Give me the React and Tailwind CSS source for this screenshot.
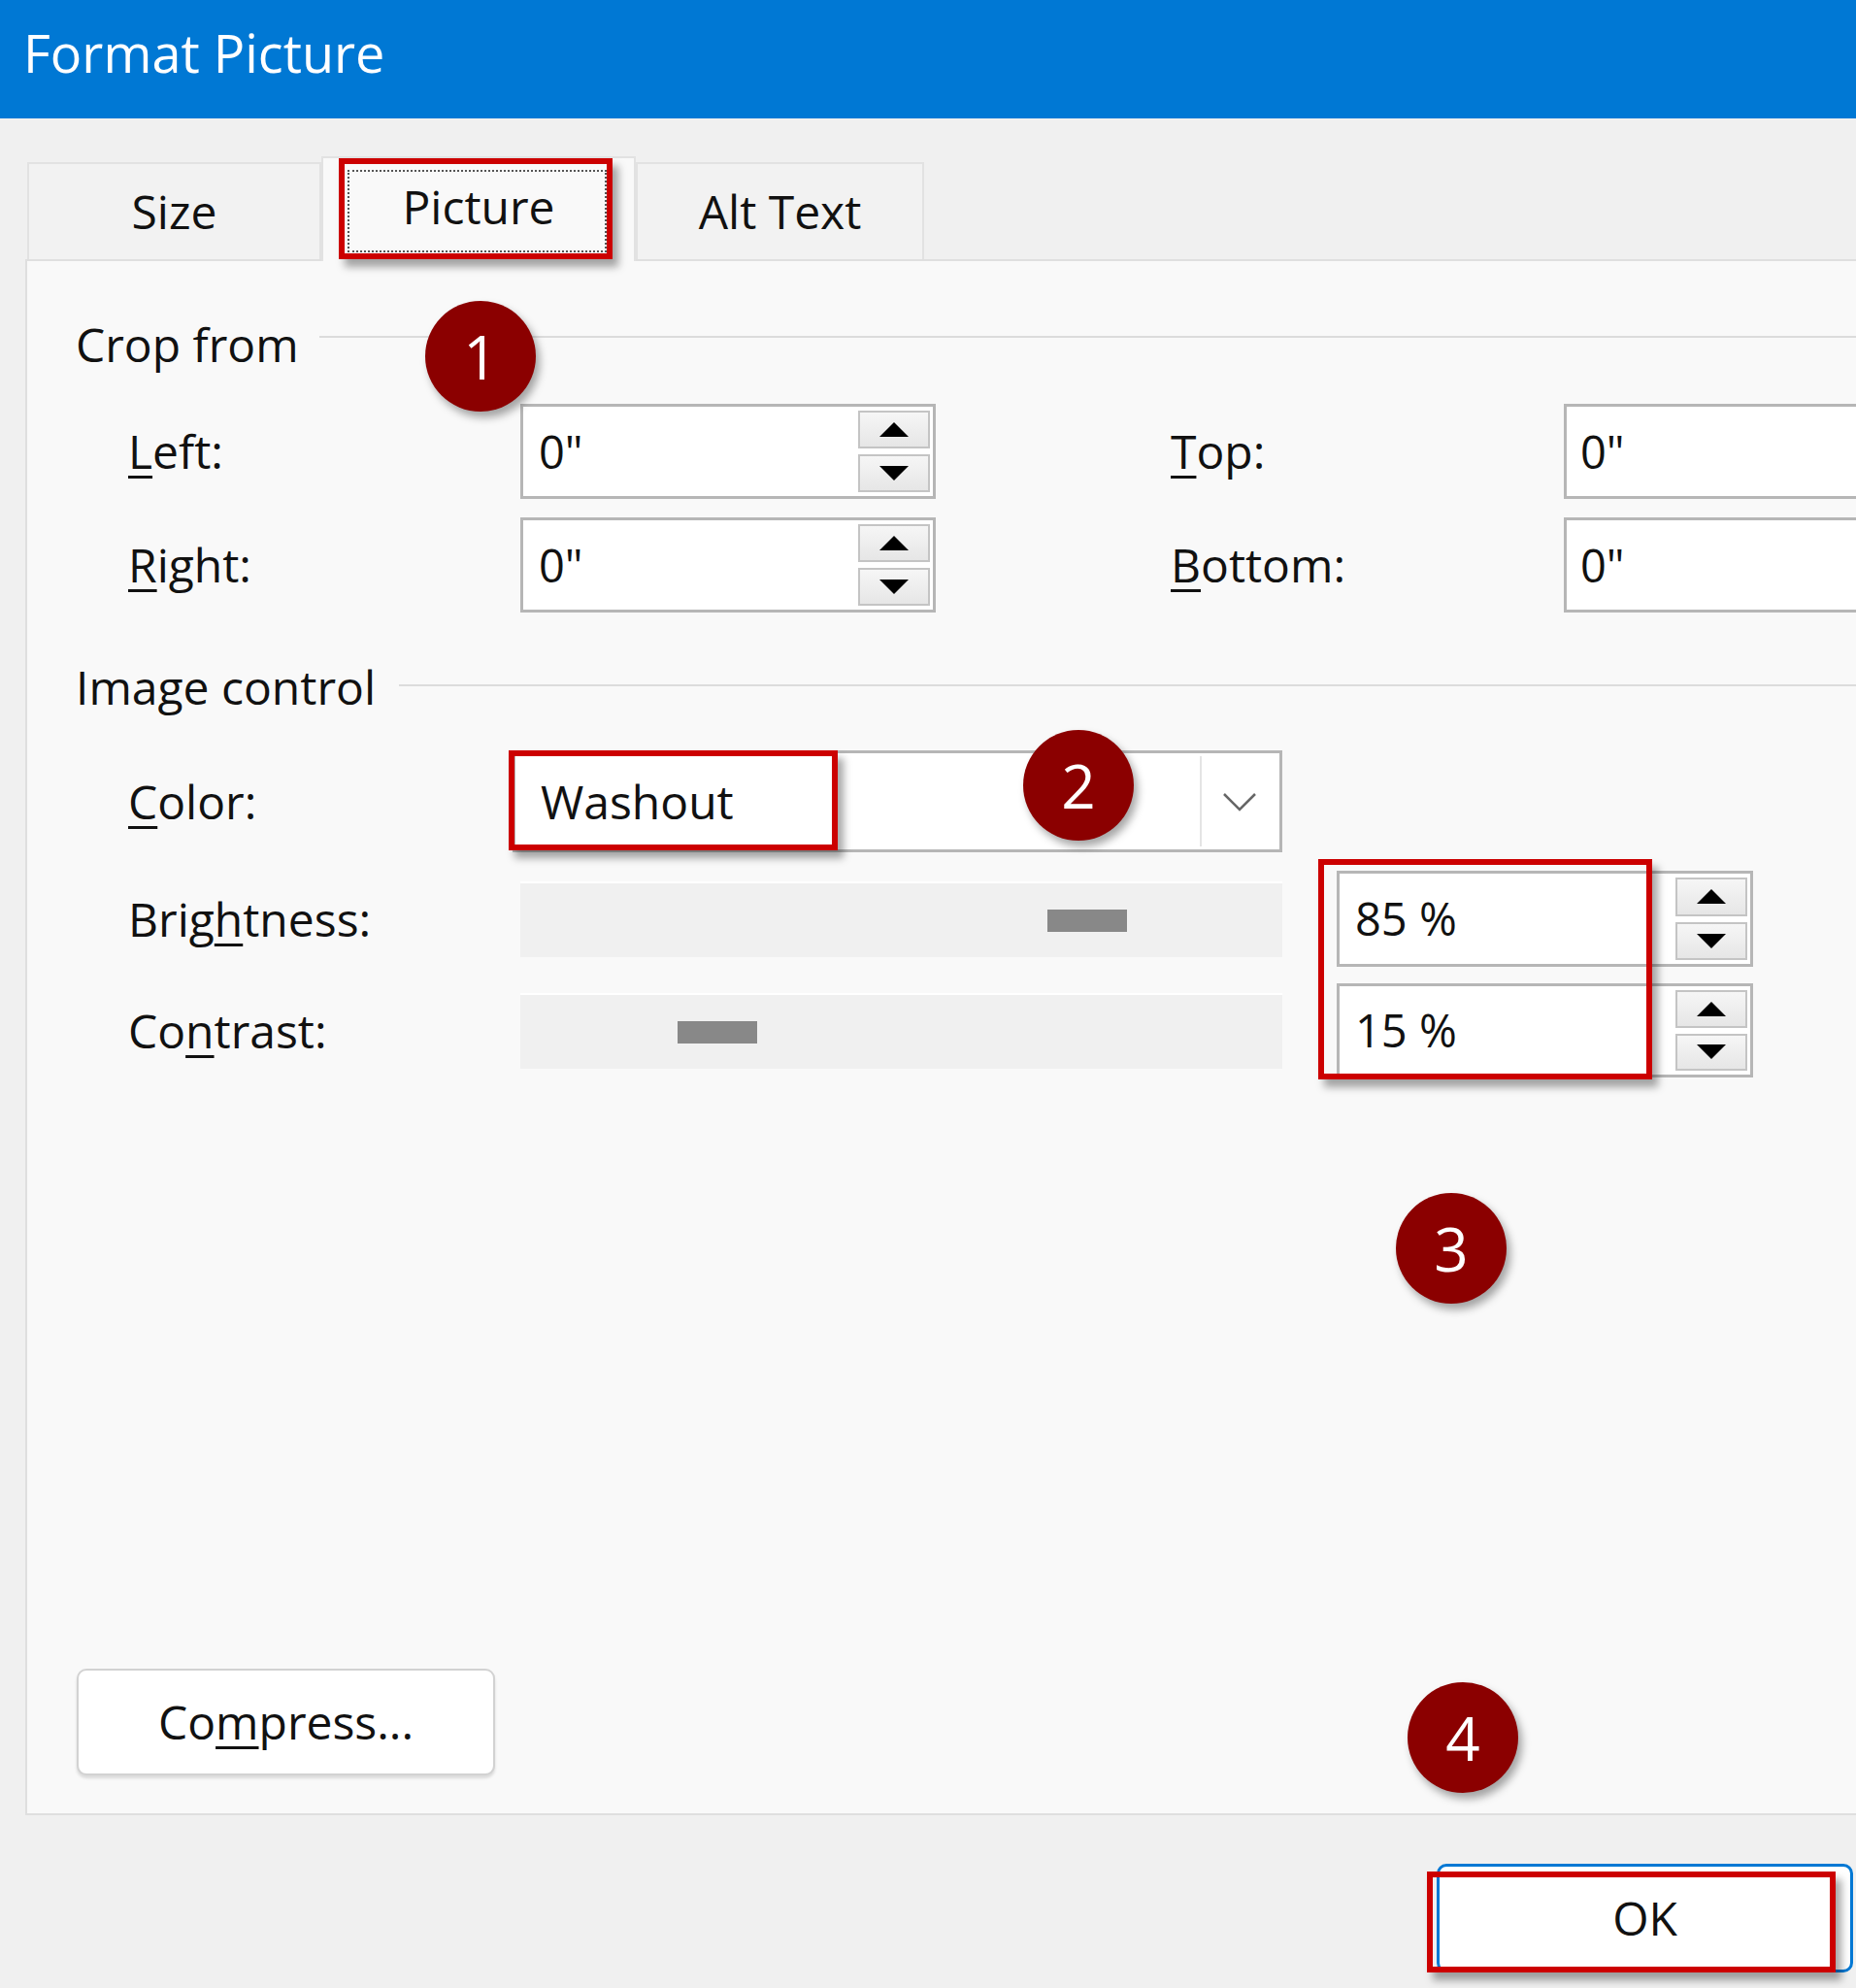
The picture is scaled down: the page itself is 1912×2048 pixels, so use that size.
import React from "react";

const font = "font-['Open_Sans','Noto_Sans',sans-serif]";

function U({ children }) {
  return <span className="underline decoration-[3px] underline-offset-[7px]">{children}</span>;
}

function Arrow({ up }) {
  return (
    <svg width="32" height="17" viewBox="0 0 32 17">
      <polygon points={up ? "16,1 31,16 1,16" : "1,1 31,1 16,16"} fill="#000" />
    </svg>
  );
}

function Spinner() {
  return (
    <div className="flex h-full w-[74px] shrink-0 flex-col gap-[6px] py-[4px]">
      <div className="flex flex-1 items-center justify-center border-2 border-[#c4c4c4] bg-gradient-to-b from-[#f6f6f6] to-[#e6e6e6]">
        <Arrow up />
      </div>
      <div className="flex flex-1 items-center justify-center border-2 border-[#c4c4c4] bg-gradient-to-b from-[#f6f6f6] to-[#e6e6e6]">
        <Arrow />
      </div>
    </div>
  );
}

function SpinInput({ value, width, height }) {
  return (
    <div
      className={`flex shrink-0 items-center justify-between border-[3px] border-[#b6b6b6] bg-white pr-[3px] ${width} ${height}`}
    >
      <span className="pl-[16px] text-[47px] leading-none text-[#111]">{value}</span>
      <Spinner />
    </div>
  );
}

function PlainInput({ value }) {
  return (
    <div className="flex h-[98px] w-[400px] shrink-0 items-center border-[3px] border-[#b6b6b6] bg-white pl-[14px]">
      <span className="text-[47px] leading-none text-[#111]">{value}</span>
    </div>
  );
}

function Badge({ n, className }) {
  return (
    <div
      className={`absolute z-30 flex h-[114px] w-[114px] items-center justify-center rounded-full bg-[#8b0000] text-[62px] font-medium leading-none text-white shadow-[4px_6px_8px_rgba(0,0,0,0.35)] ${className}`}
    >
      {n}
    </div>
  );
}

function RedBox({ className }) {
  return (
    <div
      className={`pointer-events-none absolute z-20 border-[6px] border-[#cc0000] shadow-[6px_8px_8px_rgba(0,0,0,0.35)] ${className}`}
    />
  );
}

function Slider({ thumb }) {
  return (
    <div className="relative h-[78px] w-[785px] shrink-0 border-t-2 border-white bg-[#f0f0f0]">
      <div className={`absolute top-[27px] h-[23px] w-[82px] bg-[#888888] ${thumb}`} />
    </div>
  );
}

export default function App() {
  return (
    <div className={`relative h-[2048px] w-[1912px] overflow-hidden bg-[#f0f0f0] ${font}`}>
      {/* title bar */}
      <div className="flex h-[122px] items-start bg-[#0078d4] pl-[24px] pt-[22px]">
        <span className="text-[54px] leading-[64px] text-white">Format Picture</span>
      </div>

      {/* tabs */}
      <div className="flex h-[145px] items-end pl-[28px]">
        <div className="flex h-[100px] w-[303px] shrink-0 items-center justify-center border-2 border-b-0 border-[#e2e2e2] bg-[#f2f2f2] text-[48px] text-[#111]">
          Size
        </div>
        <div className="relative z-10 -mb-[2px] flex h-[108px] w-[324px] shrink-0 items-center justify-center border-2 border-b-0 border-[#e2e2e2] bg-[#f9f9f9] text-[48px] text-[#111]">
          <div className="absolute left-[25px] right-[28px] top-[12px] bottom-[9px] border-2 border-dotted border-[#555]" />
          <span className="-mt-[6px]">Picture</span>
        </div>
        <div className="flex h-[100px] w-[297px] shrink-0 items-center justify-center border-2 border-b-0 border-[#e2e2e2] bg-[#f2f2f2] text-[48px] text-[#111]">
          Alt Text
        </div>
      </div>

      {/* panel */}
      <div className="ml-[26px] flex h-[1603px] w-[1920px] flex-col border-2 border-[#dfdfdf] bg-[#f9f9f9] text-[48px] leading-none text-[#111]">
        {/* crop from */}
        <div className="mt-[56px] flex h-[60px] items-center pl-[50px]">
          <span className="shrink-0">Crop from</span>
          <div className="ml-[21px] mb-[16px] h-[2px] flex-1 bg-[#dcdcdc]" />
        </div>

        <div className="mt-[31px] flex h-[98px] items-center pl-[104px]">
          <span className="w-[404px] shrink-0"><U>L</U>eft:</span>
          <SpinInput value={'0"'} width="w-[428px]" height="h-[98px]" />
          <span className="ml-[242px] w-[405px] shrink-0"><U>T</U>op:</span>
          <PlainInput value={'0"'} />
        </div>

        <div className="mt-[19px] flex h-[98px] items-center pl-[104px]">
          <span className="w-[404px] shrink-0"><U>R</U>ight:</span>
          <SpinInput value={'0"'} width="w-[428px]" height="h-[98px]" />
          <span className="ml-[242px] w-[405px] shrink-0"><U>B</U>ottom:</span>
          <PlainInput value={'0"'} />
        </div>

        {/* image control */}
        <div className="mt-[47px] flex h-[60px] items-center pl-[50px]">
          <span className="shrink-0">Image control</span>
          <div className="ml-[24px] mb-[4px] h-[2px] flex-1 bg-[#dcdcdc]" />
        </div>

        <div className="mt-[35px] flex h-[105px] items-center pl-[104px]">
          <span className="w-[396px] shrink-0"><U>C</U>olor:</span>
          <div className="flex h-[105px] w-[793px] shrink-0 items-stretch border-[3px] border-[#b6b6b6] bg-white">
            <span className="flex flex-1 items-center pl-[26px]">Washout</span>
            <div className="my-[3px] mr-[2px] flex w-[80px] items-center justify-center border-l-2 border-[#e4e4e4]">
              <svg width="36" height="22" viewBox="0 0 36 22">
                <polyline points="2,3 18,19 34,3" fill="none" stroke="#666" strokeWidth="2.5" />
              </svg>
            </div>
          </div>
        </div>

        <div className="mt-[19px] flex h-[99px] items-center pl-[104px]">
          <span className="w-[404px] shrink-0">Brig<U>h</U>tness:</span>
          <Slider thumb="left-[543px]" />
          <div className="ml-[56px] shrink-0">
            <SpinInput value="85 %" width="w-[429px]" height="h-[99px]" />
          </div>
        </div>

        <div className="mt-[17px] flex h-[97px] items-center pl-[104px]">
          <span className="w-[404px] shrink-0">Co<U>n</U>trast:</span>
          <Slider thumb="left-[162px]" />
          <div className="ml-[56px] shrink-0">
            <SpinInput value="15 %" width="w-[429px]" height="h-[97px]" />
          </div>
        </div>

        <div className="mt-[609px] pl-[51px]">
          <button className="flex h-[110px] w-[431px] items-center justify-center rounded-[10px] border-2 border-[#d2d2d2] bg-white text-[48px] text-[#111] shadow-[0_3px_3px_rgba(0,0,0,0.12)]">
            Co<U>m</U>press...
          </button>
        </div>
      </div>

      {/* footer */}
      <div className="mt-[50px] pl-[1480px]">
        <button className="flex h-[112px] w-[429px] items-center justify-center rounded-[10px] border-[3px] border-[#0078d4] bg-white text-[48px] text-[#111]">
          OK
        </button>
      </div>

      {/* annotations */}
      <RedBox className="left-[349px] top-[163px] h-[104px] w-[282px]" />
      <RedBox className="left-[524px] top-[773px] h-[103px] w-[339px]" />
      <RedBox className="left-[1358px] top-[885px] h-[227px] w-[344px]" />
      <RedBox className="left-[1470px] top-[1928px] h-[104px] w-[421px]" />

      <Badge n="1" className="left-[438px] top-[310px]" />
      <Badge n="2" className="left-[1054px] top-[752px]" />
      <Badge n="3" className="left-[1438px] top-[1229px]" />
      <Badge n="4" className="left-[1450px] top-[1733px]" />
    </div>
  );
}
